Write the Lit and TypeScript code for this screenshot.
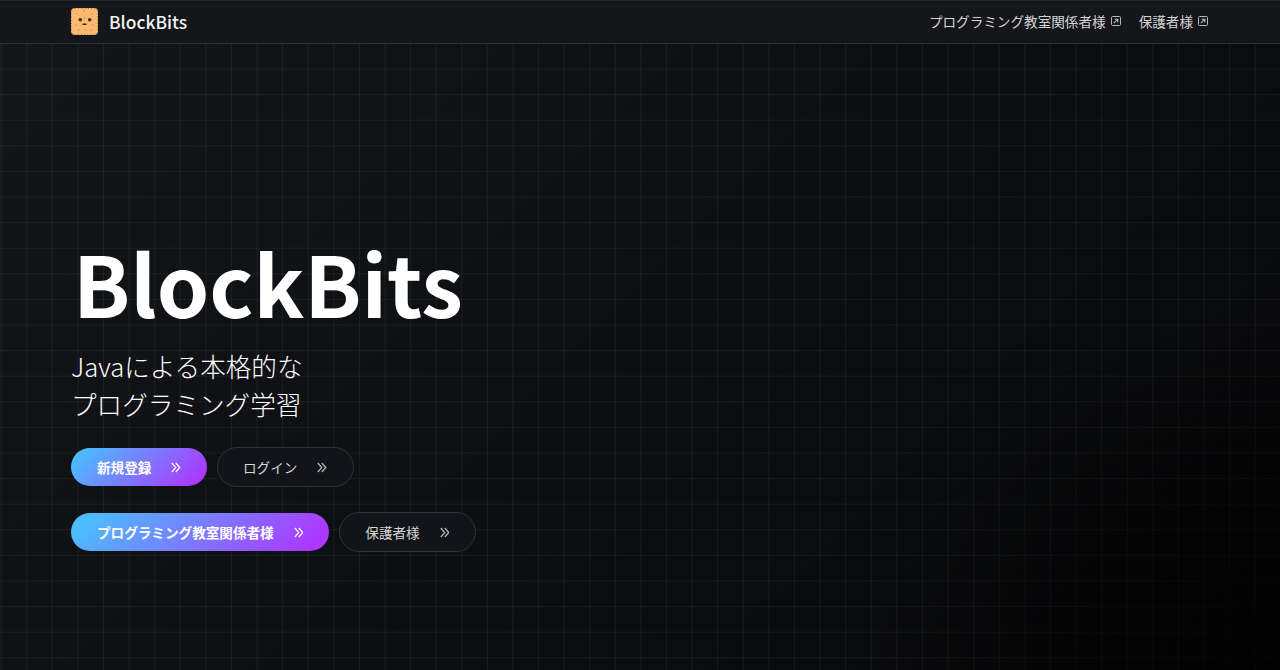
import { LitElement, html, css, svg } from 'lit';
import { customElement } from 'lit/decorators.js';

const chevrons = svg`<path d="M.8 1 L4.8 5.5 L.8 10 M4.8 1 L8.8 5.5 L4.8 10" fill="none" stroke="currentColor" stroke-width="1.2"/>`;

@customElement('app-root')
export class AppRoot extends LitElement {
  static styles = css`
    :host {
      display: block;
      height: 670px;
      overflow: hidden;
      font-family: "Noto Sans CJK JP", "Noto Sans", sans-serif;
      color: #fff;
      background-color: #0f1014;
    }
    .page {
      height: 670px;
      background:
        radial-gradient(ellipse 420px 340px at 1280px 640px, rgba(0,0,0,0.8) 0%, rgba(0,0,0,0.4) 50%, rgba(0,0,0,0) 100%),
        linear-gradient(rgba(255,255,255,0.05) 1px, transparent 1px) 0 17.4px / 25.6px 25.6px,
        linear-gradient(90deg, rgba(255,255,255,0.05) 1px, transparent 1px) 0.6px 0 / 25.6px 25.6px,
        linear-gradient(135deg, #15161a 0%, #0e0f12 45%, #0a0b0d 75%, #050506 100%);
    }
    header {
      height: 40px;
      padding: 0 72px 2px 71px;
      border-top: 1px solid #24262b;
      border-bottom: 1px solid #2a2c30;
      background: #14161a;
      display: flex;
      align-items: center;
      justify-content: space-between;
    }
    .brand {
      display: flex;
      align-items: center;
      gap: 11px;
      font-size: 17.4px;
      font-weight: 500;
      color: #f2f2f3;
    }
    .brand svg { display: block; }
    nav {
      display: flex;
      gap: 18px;
      font-size: 13.6px;
      color: #d4d5d7;
    }
    nav a {
      display: flex;
      align-items: center;
      gap: 5px;
    }
    nav svg { display: block; color: #b4b5b8; }
    .hero {
      padding: 192px 0 0 71px;
    }
    h1 {
      margin: 0 0 0 2px;
      font-size: 84px;
      font-weight: 700;
      line-height: 92px;
      color: #fff;
    }
    .lead {
      margin: 19px 0 0;
      font-size: 25.6px;
      font-weight: 300;
      line-height: 38px;
      color: #fff;
    }
    .row {
      display: flex;
      align-items: center;
      gap: 10px;
      margin-top: 24px;
    }
    .row + .row { margin-top: 25px; }
    .btn {
      box-sizing: border-box;
      height: 38px;
      border-radius: 19px;
      display: flex;
      align-items: center;
      gap: 20px;
      font-size: 13.6px;
      padding: 0 26px;
    }
    .primary {
      font-weight: 700;
      color: #fff;
      background: linear-gradient(135deg, #4bbcff 8%, #ac38ff 92%);
    }
    .ghost {
      height: 40px;
      border-radius: 20px;
      color: #d8d9db;
      background: #131419;
      border: 1px solid #303236;
      padding: 0 26px 0 25px;
    }
    .ghost svg { color: #b8b9bb; }
    .btn svg { display: block; }
  `;

  private renderExt() {
    return html`<svg width="10" height="10" viewBox="0 0 10 10" fill="none" stroke="currentColor" stroke-width="1">
      <rect x="0.5" y="0.5" width="9" height="9" rx="1"/>
      <path d="M2.8 7.2 L6.6 3.4 M3.6 3.2 H6.8 V6.4" stroke-width="1.1"/>
    </svg>`;
  }

  private renderBtn(label: string, cls: string) {
    return html`<a class="btn ${cls}">
      <span>${label}</span>
      <svg width="9.6" height="11" viewBox="0 0 9.6 11">${chevrons}</svg>
    </a>`;
  }

  render() {
    return html`
      <div class="page">
        <header>
          <div class="brand">
            <svg width="27" height="27" viewBox="0 0 27 27">
              <rect width="27" height="27" rx="4" fill="#fcb96f"/>
              <rect x=".5" y=".5" width="26" height="26" rx="3.5" fill="none" stroke="#9b7446" stroke-width="1" stroke-dasharray="1 2.2"/>
              <g fill="#c48b4e">
                <circle cx="13" cy="3" r=".8"/>
                <circle cx="6" cy="6" r=".7"/>
                <circle cx="21" cy="6" r=".7"/>
                <circle cx="13.5" cy="10" r=".7"/>
                <circle cx="5" cy="17" r=".7"/>
                <circle cx="22" cy="17" r=".7"/>
                <circle cx="8" cy="22" r=".7"/>
                <circle cx="14" cy="22" r=".7"/>
                <circle cx="20" cy="22" r=".7"/>
              </g>
              <circle cx="9.3" cy="11.7" r="1.8" fill="#3d2a18"/>
              <circle cx="18.7" cy="11.7" r="1.8" fill="#3d2a18"/>
              <rect x="11.5" y="15.5" width="4" height="1.6" rx=".6" fill="#3d2a18"/>
            </svg>
            <span>BlockBits</span>
          </div>
          <nav>
            <a>プログラミング教室関係者様 ${this.renderExt()}</a>
            <a>保護者様 ${this.renderExt()}</a>
          </nav>
        </header>
        <section class="hero">
          <h1>BlockBits</h1>
          <p class="lead">Javaによる本格的な<br />プログラミング学習</p>
          <div class="row">
            ${this.renderBtn('新規登録', 'primary')}
            ${this.renderBtn('ログイン', 'ghost')}
          </div>
          <div class="row">
            ${this.renderBtn('プログラミング教室関係者様', 'primary')}
            ${this.renderBtn('保護者様', 'ghost')}
          </div>
        </section>
      </div>
    `;
  }
}
